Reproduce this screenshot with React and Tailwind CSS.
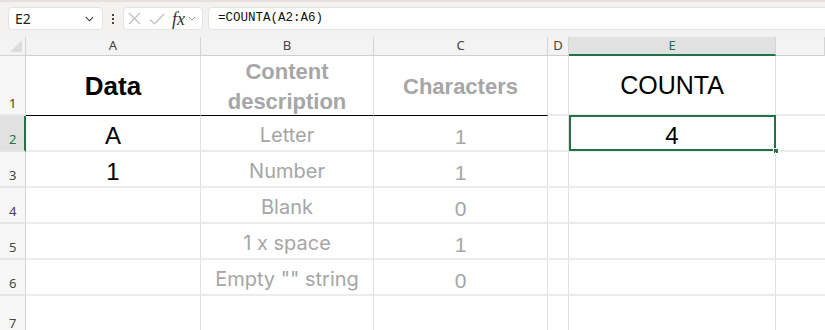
import React from 'react';

const cols = [
  { key: 'A', w: 'w-[175px]' },
  { key: 'B', w: 'w-[173px]' },
  { key: 'C', w: 'w-[174px]' },
  { key: 'D', w: 'w-[21px]' },
  { key: 'E', w: 'w-[207px]' },
  { key: '', w: 'flex-1' },
];

const bodyRows = [
  { n: 2, a: 'A', b: 'Letter', c: '1', e: '4' },
  { n: 3, a: '1', b: 'Number', c: '1' },
  { n: 4, a: '', b: 'Blank', c: '0' },
  { n: 5, a: '', b: '1 x space', c: '1' },
  { n: 6, a: '', b: 'Empty "" string', c: '0' },
];

const Chevron = ({ className }) => (
  <svg viewBox="0 0 10 6" className={className} fill="none" stroke="currentColor" strokeWidth="1.2">
    <path d="M1 1l4 4 4-4" />
  </svg>
);

const Toolbar = () => (
  <div className="h-[37px] bg-[#f3f2f1] border-t-2 border-[#e6e0df] flex items-start pt-[5px] pl-2">
    {/* name box */}
    <div className="w-[95px] h-[23px] shrink-0 bg-white rounded-[4px] border border-[#e3e3e3] flex items-center pl-[6px] pr-[8px]">
      <span className="text-[14px] text-[#222] flex-1" style={{ fontFamily: '"Noto Sans", sans-serif' }}>E2</span>
      <Chevron className="w-[9px] h-[6px] text-[#333] shrink-0" />
    </div>
    <div className="w-[20px] h-[23px] shrink-0 flex flex-col items-center justify-center gap-[2px]">
      <span className="w-[2px] h-[2px] bg-[#444]" />
      <span className="w-[2px] h-[2px] bg-[#444]" />
      <span className="w-[2px] h-[2px] bg-[#444]" />
    </div>
    {/* fx box */}
    <div className="w-[80px] h-[23px] shrink-0 bg-white rounded-[4px] border border-[#e3e3e3] flex items-center pl-[4px]">
      <svg viewBox="0 0 13 13" className="w-[13px] h-[13px] shrink-0 text-[#bdbdbd]" fill="none" stroke="currentColor" strokeWidth="1.2">
        <path d="M1 1l11 11M12 1L1 12" />
      </svg>
      <svg viewBox="0 0 16 12" className="w-[16px] h-[12px] shrink-0 ml-[8px] text-[#bdbdbd]" fill="none" stroke="currentColor" strokeWidth="1.2">
        <path d="M1 6.5l4.5 4.5L15 1" />
      </svg>
      <span className="ml-[7px] text-[18px] italic text-[#333] leading-none" style={{ fontFamily: '"Liberation Serif", serif' }}>fx</span>
      <Chevron className="w-[8px] h-[5px] ml-[3px] shrink-0 text-[#888]" />
    </div>
    {/* formula input */}
    <div className="flex-1 ml-[5px] h-[23px] bg-white rounded-l-[4px] border border-r-0 border-[#e3e3e3] flex items-center pl-[9px]">
      <span className="text-[12.5px] text-[#111]" style={{ fontFamily: '"Liberation Mono", monospace' }}>=COUNTA(A2:A6)</span>
    </div>
  </div>
);

const HeaderRow = () => (
  <div className="flex h-[19px]">
    <div className="w-[26px] h-full bg-[#f3f3f3] border-r border-b border-[#d4d4d4] relative">
      <svg viewBox="0 0 12 12" className="absolute right-[3px] bottom-[3px] w-[12px] h-[12px]">
        <path d="M12 0L12 12L0 12Z" fill="#dcdcdc" />
      </svg>
    </div>
    {cols.map((c, i) => (
      <div
        key={i}
        className={`${c.w} h-full flex items-center justify-center text-[13px] ${
          c.key === 'E'
            ? 'bg-[#e1e1e1] border-b-2 border-b-[#217346] text-[#217346] border-r border-r-[#d4d4d4]'
            : 'bg-[#f3f3f3] border-b border-b-[#cfcfcf] text-[#444] border-r border-r-[#d4d4d4]'
        }`}
        style={{ fontFamily: '"Noto Sans", sans-serif' }}
      >
        {c.key}
      </div>
    ))}
  </div>
);

const RowHead = ({ n, selected, h }) => (
  <div
    className={`w-[26px] ${h} flex items-end pl-[9px] pb-[1px] text-[13px] ${
      selected
        ? 'bg-[#e1e1e1] text-[#217346] border-r-2 border-r-[#217346] border-b-2 border-b-[#e6e6e6]'
        : 'bg-[#f7f7f7] text-[#444] border-r border-r-[#d4d4d4] border-b-2 border-b-[#e6e6e6]'
    }`}
    style={{ fontFamily: '"Noto Sans", sans-serif' }}
  >
    {n}
  </div>
);

const sans = { fontFamily: '"Liberation Sans", Arial, sans-serif' };
const aptos = { fontFamily: 'Inter, "Liberation Sans", sans-serif' };

const App = () => {
  return (
    <div className="w-[825px] h-[330px] overflow-hidden bg-white">
      <Toolbar />
      <HeaderRow />

      {/* row 1 */}
      <div className="flex h-[60px]">
        <RowHead n={1} h="h-[60px]" />
        <div className="w-[175px] h-full border-r border-r-[#e1e1e1] border-b border-b-black flex items-center justify-center pt-[2px]">
          <span className="text-[26px] font-bold text-black" style={sans}>Data</span>
        </div>
        <div className="w-[173px] h-full border-r border-r-[#e1e1e1] border-b border-b-black flex items-start justify-center pt-[1px]">
          <span className="text-[22px] font-bold text-[#a6a6a6] text-center leading-[30px]" style={sans}>
            Content<br />description
          </span>
        </div>
        <div className="w-[174px] h-full border-r border-r-[#e1e1e1] border-b border-b-black flex items-center justify-center pt-[2px]">
          <span className="text-[22px] font-bold text-[#a6a6a6]" style={sans}>Characters</span>
        </div>
        <div className="w-[21px] h-full border-r border-r-[#e1e1e1] border-b-2 border-b-[#ececec]" />
        <div className="w-[207px] h-full border-r border-r-[#e1e1e1] border-b-2 border-b-[#ececec] flex items-center justify-center pt-[2px]">
          <span className="text-[25px] text-black" style={sans}>COUNTA</span>
        </div>
        <div className="flex-1 h-full border-b-2 border-b-[#ececec]" />
      </div>

      {bodyRows.map(r => (
        <div key={r.n} className="flex h-[36px]">
          <RowHead n={r.n} selected={r.n === 2} h="h-[36px]" />
          <div className="w-[175px] h-full border-r border-r-[#e1e1e1] border-b-2 border-b-[#ececec] flex items-end justify-center pb-[2px]">
            <span className="text-[24px] leading-none text-black" style={sans}>{r.a}</span>
          </div>
          <div className="w-[173px] h-full border-r border-r-[#e1e1e1] border-b-2 border-b-[#ececec] flex items-end justify-center pb-[5px]">
            <span className="text-[20px] leading-none text-[#a6a6a6]" style={aptos}>{r.b}</span>
          </div>
          <div className="w-[174px] h-full border-r border-r-[#e1e1e1] border-b-2 border-b-[#ececec] flex items-end justify-center pb-[3px]">
            <span className="text-[21px] leading-none text-[#a6a6a6]" style={sans}>{r.c}</span>
          </div>
          <div className="w-[21px] h-full border-r border-r-[#e1e1e1] border-b-2 border-b-[#ececec]" />
          <div className="w-[207px] h-full border-r border-r-[#e1e1e1] border-b-2 border-b-[#ececec] flex items-end justify-center pb-[2px] relative">
            {r.e && <span className="text-[24px] leading-none text-black" style={sans}>{r.e}</span>}
            {r.n === 2 && (
              <>
                <div className="absolute left-0 -top-[1px] -right-[1px] -bottom-[1px] border-2 border-[#217346]" />
                <div className="absolute -right-[4px] -bottom-[4px] w-[6px] h-[6px] bg-[#217346] border border-white" />
              </>
            )}
          </div>
          <div className="flex-1 h-full border-b-2 border-b-[#ececec]" />
        </div>
      ))}

      {/* row 7 */}
      <div className="flex h-[40px]">
        <RowHead n={7} h="h-[40px]" />
        <div className="w-[175px] h-full border-r border-r-[#e1e1e1]" />
        <div className="w-[173px] h-full border-r border-r-[#e1e1e1]" />
        <div className="w-[174px] h-full border-r border-r-[#e1e1e1]" />
        <div className="w-[21px] h-full border-r border-r-[#e1e1e1]" />
        <div className="w-[207px] h-full border-r border-r-[#e1e1e1]" />
        <div className="flex-1 h-full" />
      </div>
    </div>
  );
};

export default App;
